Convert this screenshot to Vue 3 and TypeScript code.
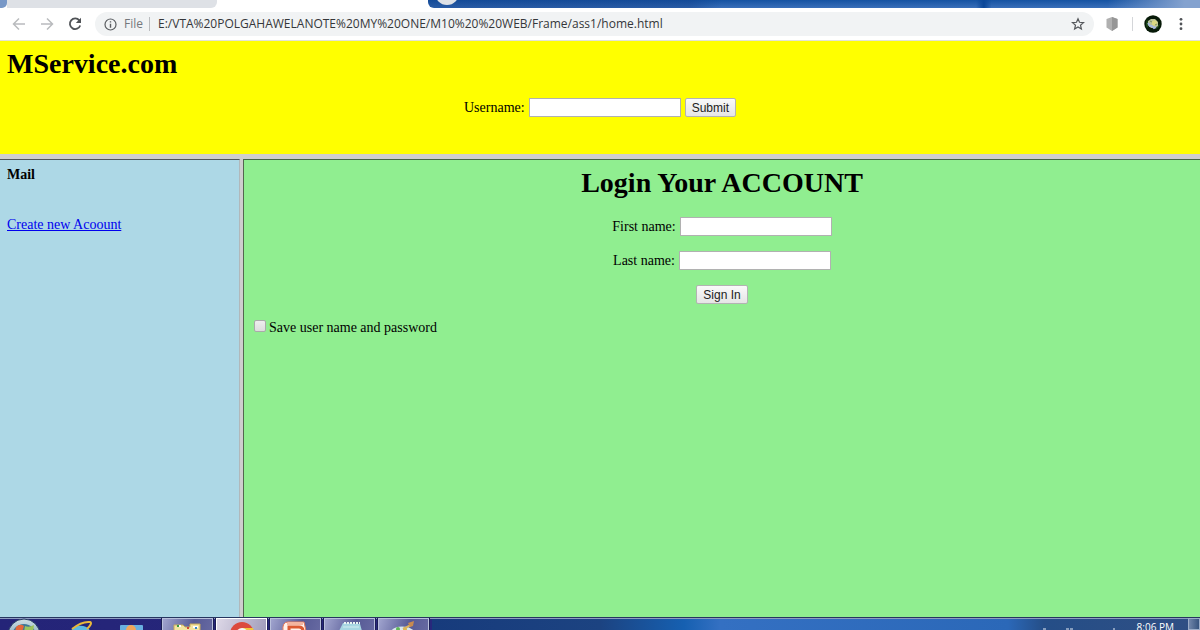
<script setup lang="ts">
import { ref } from 'vue'

const address = ref<string>('E:/VTA%20POLGAHAWELANOTE%20MY%20ONE/M10%20%20WEB/Frame/ass1/home.html')
const username = ref<string>('')
const firstName = ref<string>('')
const lastName = ref<string>('')
const remember = ref<boolean>(false)
</script>

<template>
  <div class="screen">
    <div class="tabs">
      <div class="tab-edge"></div>
      <div class="tab-idle"></div>
      <div class="tab-active"></div>
      <div class="titlebar"><span class="new-tab"></span></div>
    </div>

    <nav class="toolbar" aria-label="Browser">
      <button class="tool" type="button" aria-label="Back">
        <svg width="14" height="14" viewBox="0 0 14 14"><path d="M13 7H2M7 1.5L1.5 7L7 12.5" fill="none" stroke="#b9bbbe" stroke-width="1.5" /></svg>
      </button>
      <button class="tool" type="button" aria-label="Forward">
        <svg width="14" height="14" viewBox="0 0 14 14"><path d="M1 7H12M7 1.5L12.5 7L7 12.5" fill="none" stroke="#b9bbbe" stroke-width="1.5" /></svg>
      </button>
      <button class="tool" type="button" aria-label="Reload">
        <svg width="14" height="14" viewBox="0 0 14 14"><path d="M11.3 3.4A5.3 5.3 0 1 0 12.2 8.5" fill="none" stroke="#505357" stroke-width="1.8" /><path d="M13 .8V6H7.8Z" fill="#505357" /></svg>
      </button>
      <div class="omnibox">
        <svg class="info" width="13" height="13" viewBox="0 0 13 13"><circle cx="6.5" cy="6.5" r="5.5" fill="none" stroke="#5a5d61" stroke-width="1.2" /><path d="M6.5 5.7V9.7M6.5 3.2V4.6" stroke="#5a5d61" stroke-width="1.4" /></svg>
        <span class="scheme">File</span>
        <input v-model="address" class="address" type="text" aria-label="Address" spellcheck="false" />
        <button class="star" type="button" aria-label="Bookmark">
          <svg width="14" height="14" viewBox="0 0 14 14"><path d="M7 1.7L8.5 5.3L12.5 5.6L9.5 8.2L10.4 12.1L7 10L3.6 12.1L4.5 8.2L1.5 5.6L5.5 5.3Z" fill="none" stroke="#55585c" stroke-width="1.2" /></svg>
        </button>
      </div>
      <div class="extras">
        <svg width="12" height="14" viewBox="0 0 12 14"><path d="M6 0L11.5 2V10.5L6 14L.5 10.5V2Z" fill="#b0b0b0" /><path d="M6 0L11.5 2V10.5L6 14Z" fill="#969696" /></svg>
        <span class="rule"></span>
        <svg width="18" height="18" viewBox="0 0 18 18">
          <circle cx="9" cy="9" r="8.7" fill="#071a08" />
          <path d="M3 4Q1 9 3 13L5 10Z M12 14Q15 13 16 9L13 11Z" fill="#1e481a" />
          <path d="M4 6L7 4L11 4L14 7L14 11L11 13L7 13L4 10Z" fill="#b9c19a" />
          <path d="M4 8L6 11L8 11L10 13L12 12" fill="none" stroke="#a9b9de" stroke-width="2" />
          <circle cx="10.5" cy="8" r="2.7" fill="#dad883" />
          <path d="M6 6L8 7M11 10L13 9" fill="none" stroke="#7d9160" />
        </svg>
        <button class="menu" type="button" aria-label="Menu">
          <svg width="4" height="14" viewBox="0 0 4 14"><g fill="#505357"><circle cx="2" cy="2.3" r="1.4" /><circle cx="2" cy="7" r="1.4" /><circle cx="2" cy="11.7" r="1.4" /></g></svg>
        </button>
      </div>
    </nav>

    <header class="banner">
      <h1>MService.com</h1>
      <form class="line" @submit.prevent>
        <label for="username">Username:</label>
        <input id="username" v-model="username" class="field" type="text" />
        <button class="push" type="submit">Submit</button>
      </form>
    </header>

    <div class="frames">
      <aside class="side">
        <h2>Mail</h2>
        <a href="#create">Create new Acoount</a>
      </aside>
      <main class="content">
        <h1>Login Your ACCOUNT</h1>
        <form @submit.prevent>
          <div class="line">
            <label for="first">First name:</label>
            <input id="first" v-model="firstName" class="field" type="text" />
          </div>
          <div class="line">
            <label for="last">Last name:</label>
            <input id="last" v-model="lastName" class="field" type="text" />
          </div>
          <div class="line">
            <button class="push" type="submit">Sign In</button>
          </div>
          <div class="save">
            <input id="save" v-model="remember" type="checkbox" />
            <label for="save">Save user name and password</label>
          </div>
        </form>
      </main>
    </div>

    <footer class="taskbar">
      <div class="pinned">
        <svg width="162" height="12" viewBox="0 0 162 12">
          <defs>
            <linearGradient id="orb" x2="0" y2="1"><stop offset="0" stop-color="#cfe0e4" /><stop offset="1" stop-color="#4a7fa0" /></linearGradient>
          </defs>
          <circle cx="24" cy="17" r="16" fill="url(#orb)" stroke="#243a62" />
          <circle cx="24" cy="18" r="12" fill="#3d7797" />
          <path d="M16 9Q20 5 24 8L22 14H15Z" fill="#e5673a" />
          <path d="M25 8Q29 10 34 7L33 14H24Z" fill="#9cc45c" />
          <path d="M70 14A12 12 0 0 1 91 14H85A7 7 0 0 0 76 14Z" fill="#5bb9e4" />
          <path d="M72 11Q82 3 90 4Q93 5 87 11" fill="none" stroke="#e9b83b" stroke-width="2" />
          <rect x="120" y="7" width="23" height="8" rx="1" fill="#69afe0" />
          <path d="M126 12A5 5 0 0 1 136 12Z" fill="#f2a55a" />
        </svg>
      </div>
      <div class="task">
        <svg width="50" height="12" viewBox="0 0 50 12">
          <path d="M11 12V6H20L22 8H27V5H37V12Z" fill="#f4e4a0" stroke="#c7aa5b" />
          <path d="M14 7H18M30 8H35" stroke="#fff" stroke-width="2" />
          <path d="M14 7H16" stroke="#389b43" stroke-width="2" /><path d="M24 9H26" stroke="#cf4936" stroke-width="2" /><path d="M32 9H34" stroke="#3b87c5" stroke-width="2" />
        </svg>
      </div>
      <div class="task current">
        <svg width="50" height="12" viewBox="0 0 50 12">
          <circle cx="25" cy="15" r="12" fill="#dc4a3d" /><path d="M13 11L19 11L18 18H12Z" fill="#47a84a" /><path d="M25 9H36L38 16H25Z" fill="#f3c63c" /><circle cx="25" cy="15" r="6" fill="#f5f5f5" />
        </svg>
      </div>
      <div class="task">
        <svg width="50" height="12" viewBox="0 0 50 12">
          <path d="M12 12Q11 3 17 3H33L35 12Z" fill="#fff1e9" stroke="#e67857" /><path d="M18 12V8H28Q32 8 32 12" fill="none" stroke="#db5a32" stroke-width="3" /><path d="M16 5H32" stroke="#e67857" />
        </svg>
      </div>
      <div class="task">
        <svg width="50" height="12" viewBox="0 0 50 12">
          <path d="M18 4L35 5L37 12H14Z" fill="#a7d6e2" /><path d="M19 4H35" stroke="#e9f4f2" stroke-width="2" stroke-dasharray="2 1" /><path d="M18 8H34" stroke="#d2edf1" />
        </svg>
      </div>
      <div class="task">
        <svg width="50" height="12" viewBox="0 0 50 12">
          <path d="M12 12Q16 6 29 8L36 12Z" fill="#d9e7ee" /><circle cx="19" cy="10" r="2" fill="#60b858" /><circle cx="26" cy="10" r="2" fill="#e5b841" /><path d="M24 10L32 6" stroke="#d9b360" stroke-width="2" /><path d="M29 4L35 2L34 7L31 8Z" fill="#c98a50" />
        </svg>
      </div>
      <div class="tray">
        <svg width="80" height="12" viewBox="0 0 80 12"><path d="M2 11H5M25 11H28M29 11H32M72 11H74" stroke="#e7edf4" /></svg>
        <time class="clock">8:06 PM</time>
        <button class="desktop" type="button" aria-label="Show desktop"></button>
      </div>
    </footer>
  </div>
</template>

<style>
body {
  margin: 0;
}
</style>

<style scoped>
* {
  box-sizing: border-box;
}
.screen {
  display: flex;
  flex-direction: column;
  height: 100vh;
  overflow: hidden;
  color: #000;
  font: 14px/16px "Liberation Serif", serif;
}
button {
  margin: 0;
  padding: 0;
  border: 0;
  background: none;
}
svg {
  display: block;
  flex: none;
}
.tabs {
  display: flex;
  flex: none;
  height: 8px;
  background: #fff;
}
.tab-edge {
  width: 7px;
  border-radius: 0 0 5px 0;
  background: #7898c7;
}
.tab-idle {
  width: 210px;
  border-radius: 0 0 6px 0;
  background: #dee1e6;
}
.tab-active {
  width: 211px;
}
.titlebar {
  flex: 1;
  overflow: hidden;
  border-radius: 0 0 0 6px;
  background:
    linear-gradient(90deg, #123f8866 0, #123f8866 34%, transparent 38%, transparent 71%, #0b4798 72%, transparent 73%, transparent 88%, #84a2cf 98%),
    linear-gradient(#1553a2, #396fb9);
}
.new-tab {
  display: block;
  width: 24px;
  height: 24px;
  margin: -19px 0 0 7px;
  border-radius: 50%;
  background: #dee1e6;
}
.toolbar {
  display: flex;
  flex: none;
  align-items: center;
  height: 33px;
  padding: 0 17px 0 12px;
  border-bottom: 1px solid #e3e3d6;
  background: #fff;
}
.tool {
  width: 14px;
  margin-right: 14px;
}
.omnibox {
  display: flex;
  flex: 1;
  align-items: center;
  height: 24px;
  margin-left: -1px;
  padding: 0 9px;
  border-radius: 12px;
  background: #f1f3f4;
  font: 12px/16px "Open Sans", sans-serif;
}
.scheme {
  margin-left: 7px;
  padding-right: 6px;
  border-right: 1px solid #b9bbbe;
  color: #75787c;
  line-height: 14px;
}
.address {
  flex: 1;
  min-width: 0;
  padding: 0 0 0 8px;
  border: 0;
  outline: 0;
  background: none;
  color: #35373a;
  font: inherit;
}
.extras {
  display: flex;
  align-items: center;
  margin-left: 12px;
}
.rule {
  width: 1px;
  height: 14px;
  margin: 0 11px 0 14px;
  background: #d4d6d9;
}
.menu {
  margin-left: 17px;
}
.banner {
  flex: none;
  height: 113px;
  padding: 7px;
  background: #ff0;
}
h1 {
  margin: 0 0 18px;
  font-size: 28px;
  line-height: 32px;
}
.line {
  display: flex;
  justify-content: center;
  gap: 4px;
  height: 20px;
  margin-bottom: 14px;
}
.line label {
  line-height: 20px;
}
.field {
  width: 152px;
  height: 19px;
  padding: 1px 2px;
  border: 1px solid #b1b1b1;
  background: #fff;
  font: 12px "Liberation Sans", sans-serif;
}
.push {
  height: 19px;
  padding: 0 6px;
  border: 1px solid #b3b3b3;
  border-radius: 2px;
  background: linear-gradient(#fafafa, #e5e5e5);
  color: #222;
  font: 12px/16px "Liberation Sans", sans-serif;
}
.frames {
  display: flex;
  flex: 1;
  min-height: 0;
  border-top: 5px solid #cecece;
}
.side {
  width: 20%;
  padding: 7px;
  border-top: 1px solid #4f5659;
  border-right: 1px solid #b0b8bb;
  background: #add8e6;
}
h2 {
  margin: 0 0 34px;
  font-size: 14px;
  line-height: 16px;
}
a {
  color: #00e;
}
.content {
  flex: 1;
  margin-left: 3px;
  padding: 7px;
  border-top: 1px solid #446543;
  border-left: 1px solid #53664f;
  box-shadow: -3px 0 0 #cecece;
  background: #90ee90;
}
.content h1 {
  text-align: center;
}
.save {
  display: flex;
  align-items: flex-start;
  gap: 3px;
  padding-left: 3px;
}
.save input {
  width: 12px;
  height: 12px;
  margin: 1px 0 0;
  appearance: none;
  border: 1px solid #aaa;
  border-radius: 2px;
  background: linear-gradient(#eee, #ddd);
}
.save input:checked {
  background: #397bd2;
}
.save label {
  line-height: 18px;
}
.taskbar {
  display: flex;
  flex: none;
  height: 13px;
  overflow: hidden;
  border-top: 1px solid #263660;
  background: linear-gradient(90deg, #242478, #28287c 36%, #173b7c 36%, #1c4381 50%, #1660b1 57%, #3470c2 60%, #2b68b8 84%, #254e87 87%, #304f84);
  box-shadow: inset 0 1px 0 #8e9bc1;
}
.pinned {
  width: 162px;
}
.task {
  width: 51px;
  margin-right: 3px;
  border: solid #b9c0dc;
  border-width: 1px 1px 0;
  outline: 1px solid #1b1e55;
  background: linear-gradient(110deg, #a0a4ce, #575b96 60%, #6669a1);
}
.current {
  border-color: #fff;
  background: linear-gradient(110deg, #ddd8e7, #a19dbb);
}
.tray {
  display: flex;
  margin-left: auto;
}
.clock {
  margin: 4px 14px 0 16px;
  color: #fff;
  font: 10px/10px "Open Sans", sans-serif;
}
.desktop {
  width: 12px;
  border: 1px solid #9cadc9;
  background: linear-gradient(90deg, #7186aa, #37547f);
}
</style>
